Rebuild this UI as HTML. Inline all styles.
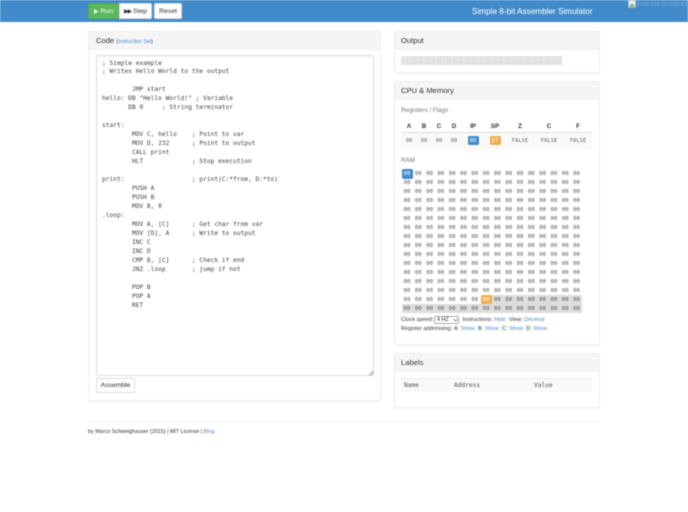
<!DOCTYPE html>
<html><head><meta charset="utf-8"><title>Simple 8-bit Assembler Simulator</title>
<style>
html,body{margin:0;padding:0;background:#fff;width:688px;height:512px;overflow:hidden}
body{position:relative;font-family:"Liberation Sans",sans-serif;color:#333;font-size:6.5px}
.a{position:absolute;white-space:pre}
.bl{filter:blur(.4px)}
.panel{position:absolute;background:#fff;border:1px solid #eee;border-radius:2px;box-sizing:border-box;box-shadow:0 1px 1px rgba(0,0,0,.04)}
.ph{position:absolute;left:0;right:0;top:0;background:#f5f5f5;border-bottom:1px solid #eee}
.t{font-size:7.6px;color:#333;line-height:10px}
.m{font-family:"DejaVu Sans Mono","Liberation Mono",monospace}
.btn{position:absolute;box-sizing:border-box;background:#fff;border:1px solid #ddd;border-radius:2px;font-size:6.8px;text-align:center;color:#333}
a,.lnk{color:#428bca}
.reg{font-weight:bold;font-size:6.2px;top:123px;line-height:7px;transform:translateX(-50%);color:#333}
.val{font-size:5.5px;top:137.5px;line-height:7px;transform:translateX(-50%);color:#666}
.row{position:absolute;left:403.6px;width:190px;font-size:5.6px;line-height:9px;color:#555;white-space:pre;word-spacing:1.2px}
</style></head><body>
<div class="bl">
<div class="a" style="left:0;top:0;width:688px;height:22px;background:#428bca"></div>
<div class="btn" style="left:88px;top:3px;width:31px;height:16px;background:#5cb85c;border-color:#4cae4c;color:#fff;line-height:15px;border-radius:2px 0 0 2px"><span style="font-size:6px">&#9654;</span> Run</div>
<div class="btn" style="left:119px;top:3px;width:33px;height:16px;line-height:15px;border-radius:0 2px 2px 0"><span style="font-size:6px;letter-spacing:-1px">&#9654;&#9654;</span> Step</div>
<div class="btn" style="left:154px;top:3px;width:28px;height:16px;line-height:15px">Reset</div>
<div class="a" style="left:472px;top:6.5px;color:#fff;font-size:8.2px;line-height:10px">Simple 8-bit Assembler Simulator</div>
<svg class="a" style="left:628px;top:0" width="8" height="8"><rect x=".5" y=".5" width="7" height="7" fill="#eef3ea" stroke="#bbb" stroke-width=".6"/><path d="M1 7L4 3l3 4z" fill="#7db46c"/></svg>
<div class="a" style="left:637px;top:1px;color:#7ba8d6;font-size:6.2px;line-height:8px">Fork me on GitHub</div>

<div class="panel" style="left:88px;top:31px;width:293px;height:370px"><div class="ph" style="height:17px"></div></div>
<div class="a t" style="left:96px;top:35.5px">Code <span style="font-size:5.2px"><span style="color:#333">(</span><span class="lnk">Instruction Set</span><span style="color:#333">)</span></span></div>
<div class="a" style="left:96px;top:55px;width:278px;height:321px;border:1px solid #ddd;border-radius:2px;box-sizing:border-box;background:#fff;box-shadow:inset 0 1px 1px rgba(0,0,0,.05)"></div>
<svg class="a" style="left:368px;top:370px" width="6" height="6"><path d="M1 5L5 1M3 5L5 3" stroke="#888" stroke-width=".6"/></svg>
<pre class="a m" style="margin:0;left:102px;top:59.5px;font-size:6.22px;line-height:8.97px;color:#444">; Simple example
; Writes Hello World to the output

        JMP start
hello: DB "Hello World!" ; Variable
       DB 0     ; String terminator

start:
        MOV C, hello    ; Point to var
        MOV D, 232      ; Point to output
        CALL print
        HLT             ; Stop execution

print:                  ; print(C:*from, D:*to)
        PUSH A
        PUSH B
        MOV B, 0
.loop:
        MOV A, [C]      ; Get char from var
        MOV [D], A      ; Write to output
        INC C
        INC D
        CMP B, [C]      ; Check if end
        JNZ .loop       ; jump if not

        POP B
        POP A
        RET</pre>
<div class="btn" style="left:96px;top:378px;width:39px;height:15px;line-height:14px">Assemble</div>

<div class="panel" style="left:394px;top:31px;width:206px;height:42px"><div class="ph" style="height:17px"></div></div>
<div class="a t" style="left:401px;top:35.5px">Output</div>
<div class="a" style="left:401px;top:56px;width:161px;height:9px;background:repeating-linear-gradient(90deg,#e4e4e4 0,#e4e4e4 5.7px,#dcdcdc 5.7px,#dcdcdc 6.7px)"></div>

<div class="panel" style="left:394px;top:81px;width:206px;height:264px"><div class="ph" style="height:17px"></div></div>
<div class="a t" style="left:401px;top:85.5px">CPU &amp; Memory</div>
<div class="a" style="left:401px;top:106.5px;font-size:6.3px;line-height:8px;color:#777">Registers / Flags</div>
<div class="a reg" style="left:409px">A</div><div class="a reg" style="left:424px">B</div><div class="a reg" style="left:439px">C</div><div class="a reg" style="left:454px">D</div><div class="a reg" style="left:473px">IP</div><div class="a reg" style="left:495px">SP</div><div class="a reg" style="left:520px">Z</div><div class="a reg" style="left:549px">C</div><div class="a reg" style="left:578px">F</div>
<div class="a" style="left:401px;top:132px;width:191px;height:18px;background:#f9f9f9;border-top:1.5px solid #ddd;box-sizing:border-box"></div>
<div class="a" style="left:468px;top:136px;width:11px;height:9px;background:#428bca;border-radius:1.5px"></div>
<div class="a" style="left:490px;top:136px;width:11px;height:9px;background:#f0ad4e;border-radius:1.5px"></div>
<div class="a val m" style="left:409px">00</div><div class="a val m" style="left:424px">00</div><div class="a val m" style="left:439px">00</div><div class="a val m" style="left:454px">00</div><div class="a val m" style="left:473px;color:#fff">00</div><div class="a val m" style="left:495px;color:#fff">E7</div><div class="a val m" style="left:520px">FALSE</div><div class="a val m" style="left:549px">FALSE</div><div class="a val m" style="left:578px">FALSE</div>
<div class="a" style="left:401px;top:156.5px;font-size:6.3px;line-height:8px;color:#777">RAM</div>
<div class="a" style="left:481px;top:295px;width:101px;height:9px;background:#ddd"></div>
<div class="a" style="left:402px;top:304px;width:180px;height:9px;background:#ddd"></div>
<div class="a" style="left:402px;top:169px;width:11px;height:9.5px;background:#428bca;border-radius:1.5px"></div>
<div class="a" style="left:481px;top:295px;width:11px;height:9px;background:#f0ad4e;border-radius:1.5px"></div>
<div class="row m" style="top:169.5px"><span style="color:#fff">00</span> 00 00 00 00 00 00 00 00 00 00 00 00 00 00 00</div>
<div class="row m" style="top:178.5px">00 00 00 00 00 00 00 00 00 00 00 00 00 00 00 00</div>
<div class="row m" style="top:187.5px">00 00 00 00 00 00 00 00 00 00 00 00 00 00 00 00</div>
<div class="row m" style="top:196.5px">00 00 00 00 00 00 00 00 00 00 00 00 00 00 00 00</div>
<div class="row m" style="top:205.5px">00 00 00 00 00 00 00 00 00 00 00 00 00 00 00 00</div>
<div class="row m" style="top:214.5px">00 00 00 00 00 00 00 00 00 00 00 00 00 00 00 00</div>
<div class="row m" style="top:223.5px">00 00 00 00 00 00 00 00 00 00 00 00 00 00 00 00</div>
<div class="row m" style="top:232.5px">00 00 00 00 00 00 00 00 00 00 00 00 00 00 00 00</div>
<div class="row m" style="top:241.5px">00 00 00 00 00 00 00 00 00 00 00 00 00 00 00 00</div>
<div class="row m" style="top:250.5px">00 00 00 00 00 00 00 00 00 00 00 00 00 00 00 00</div>
<div class="row m" style="top:259.5px">00 00 00 00 00 00 00 00 00 00 00 00 00 00 00 00</div>
<div class="row m" style="top:268.5px">00 00 00 00 00 00 00 00 00 00 00 00 00 00 00 00</div>
<div class="row m" style="top:277.5px">00 00 00 00 00 00 00 00 00 00 00 00 00 00 00 00</div>
<div class="row m" style="top:286.5px">00 00 00 00 00 00 00 00 00 00 00 00 00 00 00 00</div>
<div class="row m" style="top:295.5px">00 00 00 00 00 00 00 <span style="color:#fff">00</span> 00 00 00 00 00 00 00 00</div>
<div class="row m" style="top:304.5px">00 00 00 00 00 00 00 00 00 00 00 00 00 00 00 00</div>
<div class="a" style="left:401px;top:316px;font-size:5.6px;line-height:8px;color:#333">Clock speed:</div>
<div class="a" style="left:434px;top:316px;width:25px;height:8px;border:1px solid #aaa;border-radius:2px;box-sizing:border-box;background:#fff;font-size:5.4px;line-height:6px;padding-left:2px">4 HZ</div>
<svg class="a" style="left:453px;top:318px" width="5" height="4"><path d="M.5 1L2.5 3L4.5 1" fill="none" stroke="#666" stroke-width=".7"/></svg>
<div class="a" style="left:462.5px;top:316px;font-size:5.6px;line-height:8px">Instructions: <span class="lnk">Hide</span>  View: <span class="lnk">Decimal</span></div>
<div class="a" style="left:401px;top:325px;font-size:5.6px;line-height:8px">Register addressing:</div>
<div class="a" style="left:454px;top:325px;font-size:5.6px;line-height:8px">A: <span class="lnk">Show</span></div>
<div class="a" style="left:478px;top:325px;font-size:5.6px;line-height:8px">B: <span class="lnk">Show</span></div>
<div class="a" style="left:502px;top:325px;font-size:5.6px;line-height:8px">C: <span class="lnk">Show</span></div>
<div class="a" style="left:526px;top:325px;font-size:5.6px;line-height:8px">D: <span class="lnk">Show</span></div>

<div class="panel" style="left:394px;top:353px;width:206px;height:55px"><div class="ph" style="height:17px"></div></div>
<div class="a t" style="left:401px;top:357.5px">Labels</div>
<div class="a" style="left:401px;top:378px;width:191px;height:14px;background:#f9f9f9;border-top:1px solid #eee;box-sizing:border-box"></div>
<div class="a m" style="left:404px;top:381.5px;font-size:6.2px;line-height:8px;color:#555">Name</div>
<div class="a m" style="left:454px;top:381.5px;font-size:6.2px;line-height:8px;color:#555">Address</div>
<div class="a m" style="left:534px;top:381.5px;font-size:6.2px;line-height:8px;color:#555">Value</div>

<div class="a" style="left:88px;top:421px;width:512px;height:1px;background:#eee"></div>
<div class="a" style="left:88px;top:427.5px;font-size:5.4px;line-height:8px">by Marco Schweighauser (2015) | MIT License | <span class="lnk">Blog</span></div>
</div>
</body></html>
